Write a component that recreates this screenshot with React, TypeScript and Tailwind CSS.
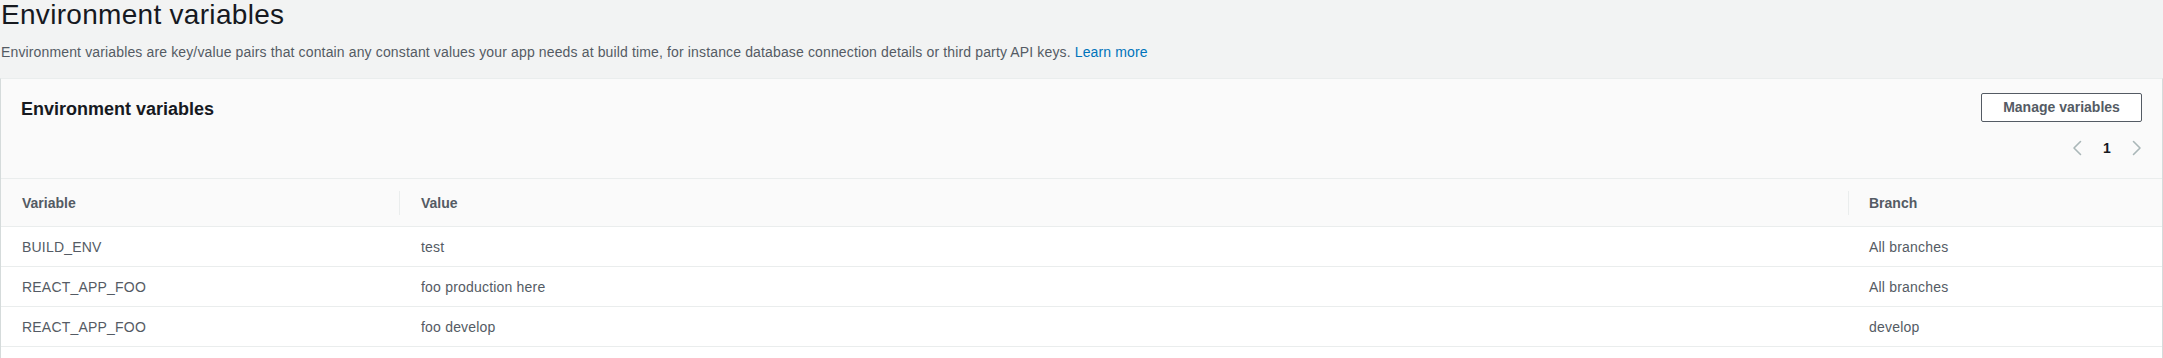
import { ChevronLeft, ChevronRight } from "lucide-react";

const rows = [
  { name: "BUILD_ENV", value: "test", branch: "All branches" },
  { name: "REACT_APP_FOO", value: "foo production here", branch: "All branches" },
  { name: "REACT_APP_FOO", value: "foo develop", branch: "develop" },
];

function Chevron({ dir }: { dir: "left" | "right" }) {
  return (
    <svg width="10" height="16" viewBox="0 0 10 16" fill="none" className="block">
      <polyline
        points={dir === "left" ? "8.5,1.5 2,8 8.5,14.5" : "1.5,1.5 8,8 1.5,14.5"}
        stroke="#aab7b8"
        strokeWidth="1.6"
        strokeLinejoin="round"
        strokeLinecap="round"
      />
    </svg>
  );
}

export default function App() {
  return (
    <div className="min-h-[358px] bg-[#f2f3f3] font-['Liberation_Sans',Arial,sans-serif] text-[#16191f]">
      {/* Page header */}
      <h1 className="text-[28px] leading-[30px] font-normal tracking-[0.3px] pl-[1px]">Environment variables</h1>
      <p className="mt-3 mb-4 text-[14px] leading-5 tracking-[0.14px] text-[#545b64] pl-[1px]">
        Environment variables are key/value pairs that contain any constant values your app needs at build time, for
        instance database connection details or third party API keys.{" "}
        <a href="#" className="text-[#0073bb]">Learn more</a>
      </p>

      {/* Container */}
      <div className="border border-[#d5dbdb] border-t-[#eaeded] border-b-0 bg-white">
        <div className="flex justify-between bg-[#fafafa] pl-[20px] pr-[20px] pt-[14px] pb-[18px] border-b border-[#eaeded]">
          <h2 className="mt-[4px] text-[18px] leading-6 font-bold text-[#16191f]">Environment variables</h2>
          <div className="flex flex-col items-end">
            <button className="h-[29px] w-[161px] rounded-[2px] border border-[#545b64] bg-white text-[14px] font-bold text-[#545b64]">
              Manage variables
            </button>
            <div className="mt-[14px] flex h-6 items-center">
              <Chevron dir="left" />
              <span className="ml-[21px] w-[8px] text-[14px] font-bold leading-5 text-[#16191f]">1</span>
              <span className="ml-[21px]">
                <Chevron dir="right" />
              </span>
            </div>
          </div>
        </div>

        {/* Table */}
        <div className="grid grid-cols-[398px_1449px_1fr] text-[14px] leading-5">
          <div className="flex h-[48px] items-center bg-[#fafafa] border-b border-[#eaeded] pl-[21px] font-bold text-[#545b64]">
            Variable
          </div>
          <div className="flex h-[48px] items-center bg-[#fafafa] border-b border-[#eaeded] font-bold text-[#545b64]">
            <span className="h-6 w-px bg-[#eaeded]" />
            <span className="ml-[21px]">Value</span>
          </div>
          <div className="flex h-[48px] items-center bg-[#fafafa] border-b border-[#eaeded] font-bold text-[#545b64]">
            <span className="h-6 w-px bg-[#eaeded]" />
            <span className="ml-[20px]">Branch</span>
          </div>

          {rows.map((r, i) => (
            <div key={i} className="contents text-[#545b64] tracking-[0.2px]">
              <div className="flex h-[40px] items-center border-b border-[#eaeded] pl-[21px]">{r.name}</div>
              <div className="flex h-[40px] items-center border-b border-[#eaeded] pl-[22px]">{r.value}</div>
              <div className="flex h-[40px] items-center border-b border-[#eaeded] pl-[21px]">{r.branch}</div>
            </div>
          ))}
        </div>
        <div className="h-[20px]" />
      </div>
    </div>
  );
}
